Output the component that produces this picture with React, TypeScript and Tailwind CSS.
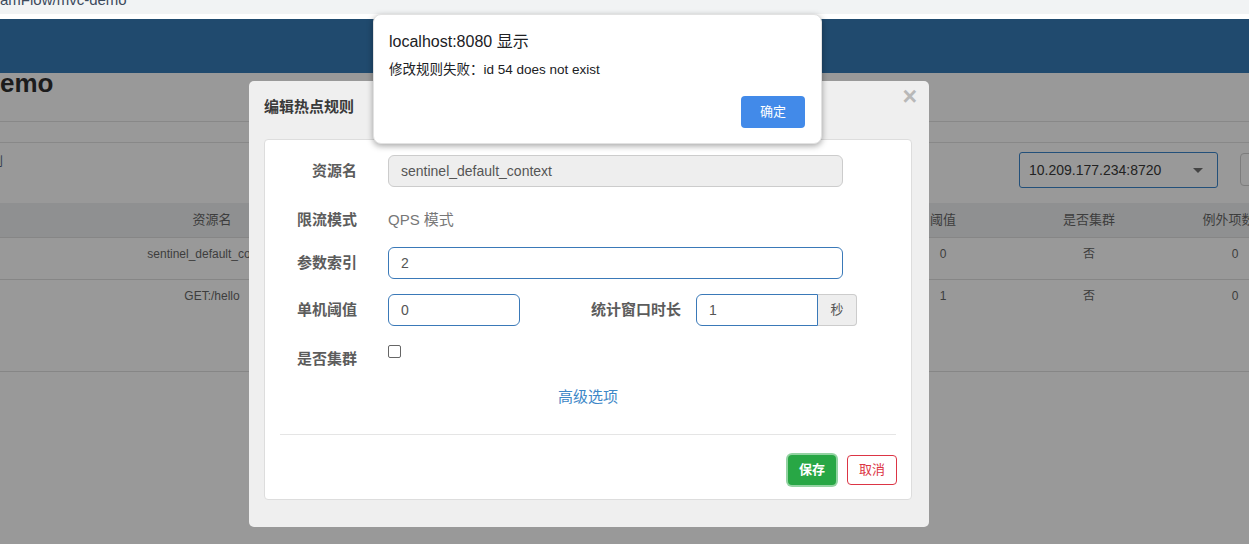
import React from "react";

const F = "font-['Liberation_Sans','Noto_Sans_CJK_SC',sans-serif]";

function Label({ children, className = "" }: { children: React.ReactNode; className?: string }) {
  return (
    <div className={"w-[92px] shrink-0 text-right text-[15px] font-bold text-[#5c5c5c] " + className}>{children}</div>
  );
}

export default function App() {
  return (
    <div className={"relative w-[1249px] h-[544px] overflow-hidden bg-[#999999] " + F}>
      {/* browser address strip */}
      <div className="h-[14px] bg-[#f1f3f4] overflow-hidden">
        <div className="-mt-[8px] leading-[15px] text-[15px] text-[#3c4a5c] whitespace-nowrap">amFlow/mvc-demo</div>
      </div>
      <div className="h-[5px] bg-white" />
      <div className="h-[54px] bg-[#204a6e]" />

      {/* dimmed page */}
      <h1 className="h-[20px] leading-[20px] text-[26px] font-bold text-[#1c1c1c] whitespace-nowrap">emo</h1>
      <div className="mt-[28px] h-px bg-[#888888]" />
      <div className="mt-[20px] h-px bg-[#888888]" />
      <div className="flex h-[60px]">
        <div className="w-[1019px] shrink-0 pt-[11px] overflow-hidden">
          <span className="block -ml-[9px] text-[12px] leading-[16px] text-[#2f3b48]">则</span>
        </div>
        <div className="mt-[9px] w-[199px] h-[36px] shrink-0 border border-[#23507a] rounded-[3px] flex items-center pl-[9px] pr-[14px] text-[14px] text-[#222222]">
          <span className="flex-1 whitespace-nowrap">10.209.177.234:8720</span>
          <span className="w-0 h-0 border-l-[5px] border-r-[5px] border-t-[5px] border-l-transparent border-r-transparent border-t-[#444444]" />
        </div>
        <div className="mt-[10px] ml-[22px] w-[70px] h-[33px] shrink-0 border border-[#7d7d7d] rounded-[4px]" />
      </div>

      {/* table header */}
      <div className="flex h-[35px] bg-[#8f9091] border-b border-[#868686] text-[13px] text-[#3d3d3d] items-center whitespace-nowrap">
        <div className="w-[424px] shrink-0 text-center">资源名</div>
        <div className="w-[223px] shrink-0 text-center">参数索引</div>
        <div className="w-[223px] shrink-0 text-center">流控模式</div>
        <div className="w-[146px] shrink-0 text-center">阈值</div>
        <div className="w-[146px] shrink-0 text-center">是否集群</div>
        <div className="w-[146px] shrink-0 text-center">例外项数目</div>
      </div>
      <div className="flex h-[42px] border-b border-[#868686] pt-[6px] text-[12px] leading-[20px] text-[#3d3d3d] whitespace-nowrap">
        <div className="w-[424px] shrink-0 text-center">sentinel_default_context</div>
        <div className="w-[223px] shrink-0 text-center">2</div>
        <div className="w-[223px] shrink-0 text-center">QPS</div>
        <div className="w-[146px] shrink-0 text-center">0</div>
        <div className="w-[146px] shrink-0 text-center">否</div>
        <div className="w-[146px] shrink-0 text-center">0</div>
      </div>
      <div className="flex h-[92px] border-b border-[#868686] pt-[6px] text-[12px] leading-[20px] text-[#3d3d3d] whitespace-nowrap">
        <div className="w-[424px] shrink-0 text-center">GET:/hello</div>
        <div className="w-[223px] shrink-0 text-center">0</div>
        <div className="w-[223px] shrink-0 text-center">QPS</div>
        <div className="w-[146px] shrink-0 text-center">1</div>
        <div className="w-[146px] shrink-0 text-center">否</div>
        <div className="w-[146px] shrink-0 text-center">0</div>
      </div>

      {/* modal */}
      <div className="absolute left-[249px] top-[81px] w-[680px] h-[446px] bg-[#efefef] rounded-[5px]">
        <div className="h-[58px] pl-[15px] pt-[16px]">
          <div className="text-[15px] leading-[20px] font-bold text-[#3a3a3a]">编辑热点规则</div>
        </div>
        <span className="absolute top-[3px] right-[12px] text-[25px] leading-[25px] font-bold text-[#b8b8b8]">×</span>
        <div className="ml-[15px] w-[648px] h-[361px] bg-white border border-[#dddddd] rounded-[4px] flex flex-col">
          <div className="mt-[15px] flex items-center h-[32px]">
            <Label>资源名</Label>
            <input
              readOnly
              disabled
              defaultValue="sentinel_default_context"
              className="ml-[31px] w-[455px] h-[32px] px-[12px] bg-[#eeeeee] border border-[#cccccc] rounded-[6px] text-[14px] text-[#555555] outline-none"
            />
          </div>
          <div className="mt-[17px] flex items-center h-[32px]">
            <Label>限流模式</Label>
            <span className="ml-[31px] text-[15px] text-[#777777]">QPS 模式</span>
          </div>
          <div className="mt-[11px] flex items-center h-[32px]">
            <Label>参数索引</Label>
            <input
              readOnly
              defaultValue="2"
              className="ml-[31px] w-[455px] h-[32px] px-[12px] bg-white border border-[#3a79b8] rounded-[6px] text-[14px] text-[#555555] outline-none"
            />
          </div>
          <div className="mt-[15px] flex items-center h-[32px]">
            <Label>单机阈值</Label>
            <input
              readOnly
              defaultValue="0"
              className="ml-[31px] w-[132px] h-[32px] px-[12px] bg-white border border-[#3a79b8] rounded-[6px] text-[14px] text-[#555555] outline-none"
            />
            <div className="w-[161px] shrink-0 text-right text-[15px] font-bold text-[#5c5c5c]">统计窗口时长</div>
            <div className="ml-[15px] flex h-[32px]">
              <input
                readOnly
                defaultValue="1"
                className="w-[122px] h-[32px] px-[12px] bg-white border border-[#3a79b8] rounded-l-[6px] text-[14px] text-[#555555] outline-none"
              />
              <div className="w-[39px] h-[32px] flex items-center justify-center bg-[#eeeeee] border border-l-0 border-[#cccccc] rounded-r-[4px] text-[13px] text-[#555555]">秒</div>
            </div>
          </div>
          <div className="mt-[17px] flex items-start h-[32px]">
            <Label className="leading-[32px]">是否集群</Label>
            <input
              type="checkbox"
              readOnly
              className="ml-[31px] mt-[2px] appearance-none w-[13px] h-[13px] border border-[#666666] rounded-[2px] bg-white"
            />
          </div>
          <div className="mt-[12px] text-center leading-[20px] text-[15px] text-[#3d87c7]">高级选项</div>
          <div className="mt-[27px] mx-[15px] border-t border-[#e5e5e5]" />
          <div className="mt-[20px] flex justify-end pr-[14px]">
            <div className="w-[48px] h-[30px] rounded-[4px] bg-[#28a745] ring-2 ring-[#93d3a2] text-white text-[13px] font-bold flex items-center justify-center">保存</div>
            <div className="ml-[11px] w-[50px] h-[30px] rounded-[4px] bg-white border border-[#dc3545] text-[#dc3545] text-[13px] flex items-center justify-center">取消</div>
          </div>
        </div>
      </div>

      {/* native alert */}
      <div className="absolute left-[373px] top-[14px] w-[449px] h-[130px] bg-white rounded-[8px] border border-[#e2e2e2] shadow-[0_2px_6px_rgba(0,0,0,0.35)] flex flex-col pl-[15px] pr-[16px] pt-[17px]">
        <div className="text-[16px] leading-[20px] text-[#202124]">localhost:8080 显示</div>
        <div className="mt-[9px] text-[13.5px] leading-[18px] text-[#202124]">修改规则失败：id 54 does not exist</div>
        <div className="mt-[17px] flex justify-end">
          <div className="w-[64px] h-[32px] rounded-[4px] bg-[#428ae9] text-white text-[13px] flex items-center justify-center">确定</div>
        </div>
      </div>
    </div>
  );
}
